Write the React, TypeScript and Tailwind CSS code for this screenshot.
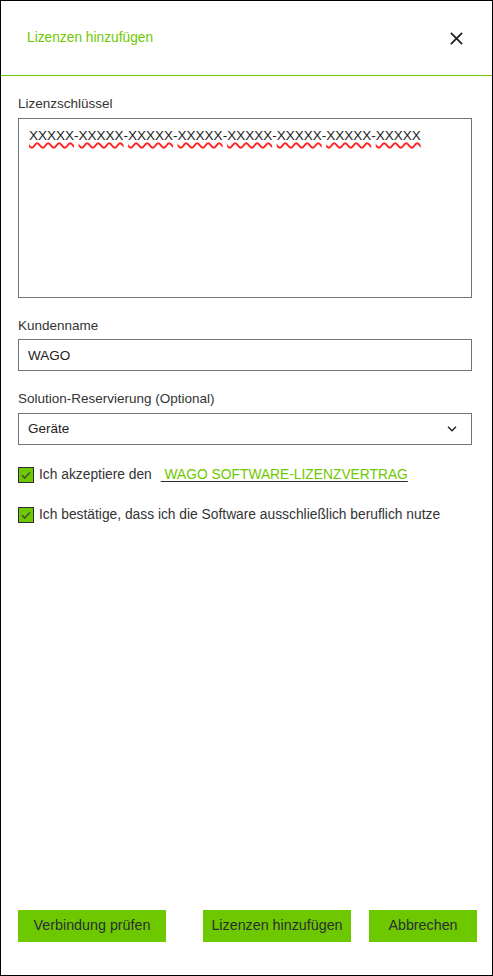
import { useState } from "react";

const GREEN = "#6ec800";

function CheckBox({ checked }: { checked: boolean }) {
  return (
    <span className="flex h-4 w-4 flex-shrink-0 items-center justify-center border-[1.5px] border-[#2b2f33] bg-[#6ec800]">
      {checked && (
        <svg className="h-3 w-3" viewBox="0 0 12 12" fill="none" stroke="#3a3f44" strokeWidth={1.3}>
          <path d="M2 6.3l2.7 2.7 5.3-5.6" />
        </svg>
      )}
    </span>
  );
}

export default function App() {
  const [key, setKey] = useState("XXXXX-XXXXX-XXXXX-XXXXX-XXXXX-XXXXX-XXXXX-XXXXX");
  const groups = key.split("-");

  return (
    <div
      className="flex h-screen flex-col border border-black bg-white text-[#333]"
      style={{ fontFamily: '"Liberation Sans", Arial, sans-serif' }}
    >
      {/* Header */}
      <div className="flex h-[75px] flex-shrink-0 items-center justify-between border-b border-[#6ec800] pl-[26px] pr-[28px]">
        <h2 className="text-[13.75px] text-[#6ec800]">Lizenzen hinzufügen</h2>
        <button aria-label="Schließen" className="text-[#222]">
          <svg className="h-[15px] w-[15px]" viewBox="0 0 16 16" fill="none" stroke="currentColor" strokeWidth={1.9}>
            <path d="M2 2l12 12M14 2L2 14" />
          </svg>
        </button>
      </div>

      {/* Form */}
      <div className="flex flex-1 flex-col pl-[17px] pr-[20px] pt-5 text-[13.5px]">
        <label className="mb-[6px] block leading-4">Lizenzschlüssel</label>
        <div className="h-[180px] border border-[#6c757d] px-[10px] pt-[9px] leading-4 text-[#222]">
          {groups.map((g, i) => (
            <span key={i}>
              <span className="underline decoration-[#ff2020] decoration-wavy decoration-[1.5px] underline-offset-[2px]">{g}</span>
              {i < groups.length - 1 && "-"}
            </span>
          ))}
        </div>

        <label className="mb-[5px] mt-5 block leading-4">Kundenname</label>
        <input
          className="h-8 border border-[#6c757d] px-[9px] text-[#222] outline-none"
          defaultValue="WAGO"
          onChange={() => setKey(key)}
        />

        <label className="mb-[6px] mt-5 block leading-4">Solution-Reservierung (Optional)</label>
        <div className="flex h-8 items-center justify-between border border-[#6c757d] pl-[9px] pr-[14px] text-[#222]">
          <span>Geräte</span>
          <svg className="h-[6px] w-[10px]" viewBox="0 0 10 6" fill="none" stroke="#222" strokeWidth={1.4}>
            <path d="M1 0.8l4 4 4-4" />
          </svg>
        </div>

        <div className="mt-5 flex h-5 items-center gap-[5px] text-[13.8px]">
          <CheckBox checked />
          <span>Ich akzeptiere den</span>
          <a href="#" className="ml-[4px] text-[#6ec800] underline decoration-[#2b2f33] underline-offset-[2px]">
            &nbsp;WAGO SOFTWARE-LIZENZVERTRAG
          </a>
        </div>

        <div className="mt-5 flex h-5 items-center gap-[5px] text-[13.8px]">
          <CheckBox checked />
          <span>Ich bestätige, dass ich die Software ausschließlich beruflich nutze</span>
        </div>

        <div className="flex-1" />

        {/* Footer */}
        <div className="mb-[33px] mr-[-5px] flex text-[14.3px]" style={{ color: "#2b2f33" }}>
          <button className="h-8 w-[148px]" style={{ backgroundColor: GREEN }}>
            Verbindung prüfen
          </button>
          <button className="ml-auto h-8 w-[148px]" style={{ backgroundColor: GREEN }}>
            Lizenzen hinzufügen
          </button>
          <button className="ml-[18px] h-8 w-[108px]" style={{ backgroundColor: GREEN }}>
            Abbrechen
          </button>
        </div>
      </div>
    </div>
  );
}
